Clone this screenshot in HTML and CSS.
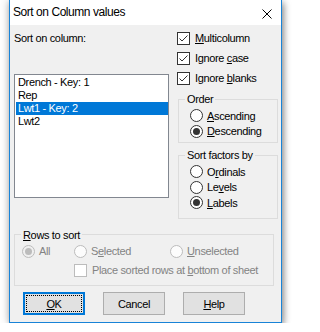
FILE: index.html
```html
<!DOCTYPE html>
<html>
<head>
<meta charset="utf-8">
<link rel="stylesheet" href="styles.css">
</head>
<body>
<div class="window">
  <div class="titlebar">
    <span class="title">Sort on Column values</span>
    <svg class="close" width="10" height="10" viewBox="0 0 10 10"><path d="M0.5 0.5L9.5 9.5M9.5 0.5L0.5 9.5" stroke="#000" stroke-width="1" fill="none"/></svg>
  </div>
  <div class="client">
    <div class="top">
      <div class="leftcol">
        <div class="label">Sort on column:</div>
        <div class="listbox">
          <div class="item">Drench - Key: 1</div>
          <div class="item">Rep</div>
          <div class="item selected">Lwt1 - Key: 2</div>
          <div class="item">Lwt2</div>
        </div>
      </div>
      <div class="rightcol">
        <div class="check"><span class="box"><svg width="11" height="11" viewBox="0 0 11 11"><path d="M1.5 5.5L4 8L9.5 2.5" stroke="#333" stroke-width="1" fill="none"/></svg></span><span class="txt"><u>M</u>ulticolumn</span></div>
        <div class="check"><span class="box"><svg width="11" height="11" viewBox="0 0 11 11"><path d="M1.5 5.5L4 8L9.5 2.5" stroke="#333" stroke-width="1" fill="none"/></svg></span><span class="txt">Ignore <u>c</u>ase</span></div>
        <div class="check"><span class="box"><svg width="11" height="11" viewBox="0 0 11 11"><path d="M1.5 5.5L4 8L9.5 2.5" stroke="#333" stroke-width="1" fill="none"/></svg></span><span class="txt">Ignore <u>b</u>lanks</span></div>
        <fieldset class="group order">
          <legend>Order</legend>
          <div class="radio"><span class="circle"></span><span class="txt"><u>A</u>scending</span></div>
          <div class="radio"><span class="circle on"></span><span class="txt"><u>D</u>escending</span></div>
        </fieldset>
        <fieldset class="group factors">
          <legend>Sort factors by</legend>
          <div class="radio"><span class="circle"></span><span class="txt">O<u>r</u>dinals</span></div>
          <div class="radio"><span class="circle"></span><span class="txt">Le<u>v</u>els</span></div>
          <div class="radio"><span class="circle on"></span><span class="txt"><u>L</u>abels</span></div>
        </fieldset>
      </div>
    </div>
    <fieldset class="group rows">
      <legend><u>R</u>ows to sort</legend>
      <div class="rowradios">
        <div class="radio disabled first"><span class="circle on"></span><span class="txt">All</span></div>
        <div class="radio disabled"><span class="circle"></span><span class="txt">S<u>e</u>lected</span></div>
        <div class="radio disabled"><span class="circle"></span><span class="txt"><u>U</u>nselected</span></div>
      </div>
      <div class="check disabled placecheck"><span class="box"></span><span class="txt">Place sorted rows at <u>b</u>ottom of sheet</span></div>
    </fieldset>
    <div class="buttons">
      <div class="btn default"><span><u>O</u>K</span></div>
      <div class="btn">Cancel</div>
      <div class="btn"><span><u>H</u>elp</span></div>
    </div>
  </div>
</div>
</body>
</html>
```

FILE: styles.css
```css
html, body {
  margin: 0;
  padding: 0;
  background: #ffffff;
}
body {
  font-family: "Liberation Sans", Arial, sans-serif;
  font-size: 11px;
  letter-spacing: -0.35px;
  color: #000;
}
.window {
  box-sizing: border-box;
  margin-left: 9px;
  width: 273px;
  height: 323px;
  border: 1px solid #1883d7;
  border-top: none;
  background: #f0f0f0;
  box-shadow: 0 0 9px rgba(0,0,0,0.28), 2px 4px 6px rgba(0,0,0,0.30);
  display: flex;
  flex-direction: column;
}
.titlebar {
  height: 25px;
  background: #ffffff;
  display: flex;
  align-items: center;
  justify-content: space-between;
  padding: 0 9px 0 3px;
  flex: none;
}
.title {
  font-size: 12px;
  letter-spacing: -0.45px;
  padding-bottom: 1px;
}
.close {
  display: block;
  margin-top: 2px;
}
.client {
  flex: 1;
  padding-left: 4px;
  display: flex;
  flex-direction: column;
}
.top {
  display: flex;
}
.leftcol {
  width: 155px;
  flex: none;
}
.label {
  margin-top: 6px;
  line-height: 14px;
}
.listbox {
  box-sizing: border-box;
  margin-top: 29px;
  height: 124px;
  border: 1px solid #828790;
  background: #fff;
  padding: 1px 0 0 1px;
}
.item {
  height: 13px;
  line-height: 13px;
  padding-left: 2px;
  white-space: nowrap;
}
.item.selected {
  background: #0078d7;
  color: #fff;
}
.rightcol {
  margin-left: 8px;
  width: 101px;
  padding-top: 7px;
}
.check {
  display: flex;
  align-items: center;
  height: 13px;
  margin-bottom: 7px;
  white-space: nowrap;
}
.check .box {
  box-sizing: border-box;
  width: 13px;
  height: 13px;
  border: 1px solid #333;
  background: #fff;
  flex: none;
  display: block;
}
.check .box svg {
  display: block;
}
.check .txt {
  margin-left: 5px;
  line-height: 13px;
}
.group {
  box-sizing: border-box;
  margin: 0;
  border: 1px solid #dcdcdc;
  padding: 2px 0 3px 6px;
  min-inline-size: 0;
}
.group legend {
  padding: 0 2px;
  line-height: 14px;
  height: 14px;
}
.order {
  margin-top: 2px;
  margin-left: 1px;
  width: 100px;
}
.factors {
  margin-top: 5px;
  margin-left: 1px;
  width: 100px;
  padding-bottom: 7px;
}
.radio {
  display: flex;
  align-items: center;
  height: 15.5px;
  white-space: nowrap;
}
.group .radio .circle {
  margin-left: 5px;
}
.circle {
  box-sizing: border-box;
  width: 13px;
  height: 13px;
  border: 1px solid #333;
  border-radius: 50%;
  background: #fff;
  flex: none;
  display: flex;
  align-items: center;
  justify-content: center;
}
.circle.on::after {
  content: "";
  width: 7px;
  height: 7px;
  border-radius: 50%;
  background: #333;
}
.radio .txt {
  margin-left: 4px;
}
.rows {
  margin-top: 9px;
  width: 260px;
  padding-bottom: 8px;
}
.rowradios {
  display: grid;
  grid-template-columns: 52px 96px auto;
  margin-left: 1px;
}
.rows .radio .circle {
  margin-left: 0;
}
.disabled {
  color: #838383;
}
.disabled .circle {
  border-color: #bcbcbc;
  background: #fcfcfc;
}
.disabled .circle.on {
  background: #f0f0f0;
}
.disabled .circle.on::after {
  background: #bcbcbc;
}
.disabled .box {
  border-color: #bcbcbc;
}
.placecheck {
  margin: 5px 0 0 53px;
}
.buttons {
  display: flex;
  gap: 18px;
  margin-top: 6px;
  padding-left: 9px;
}
.btn {
  box-sizing: border-box;
  width: 62px;
  height: 23px;
  background: #e1e1e1;
  border: 1px solid #adadad;
  display: flex;
  align-items: center;
  justify-content: center;
}
.btn.default {
  border: 2px solid #0078d7;
  outline: 1px dotted #000;
  outline-offset: -4px;
}
```
